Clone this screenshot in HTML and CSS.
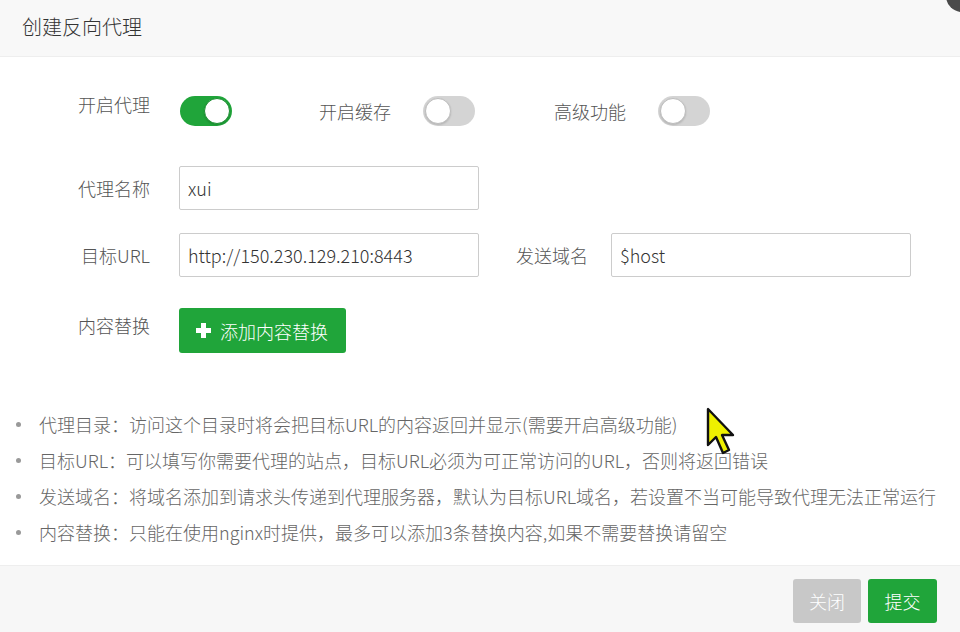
FILE: index.html
```html
<!DOCTYPE html>
<html lang="zh-CN">
<head>
<meta charset="utf-8">
<title>创建反向代理</title>
<link rel="stylesheet" href="styles.css">
</head>
<body>
<div class="dialog">
  <div class="hd">创建反向代理</div>
  <span class="close-btn"></span>
  <div class="bd">
    <div class="row row-switch">
      <label class="lbl">开启代理</label>
      <span class="switch on"><span class="knob"></span></span>
      <div class="sw-item sw-cache">
        <span class="sw-lbl">开启缓存</span>
        <span class="switch"><span class="knob"></span></span>
      </div>
      <div class="sw-item sw-adv">
        <span class="sw-lbl">高级功能</span>
        <span class="switch"><span class="knob"></span></span>
      </div>
    </div>
    <div class="row row-name">
      <label class="lbl lbl-input">代理名称</label>
      <input class="inp" type="text" value="xui">
    </div>
    <div class="row row-url">
      <label class="lbl lbl-input">目标URL</label>
      <input class="inp" type="text" value="http://150.230.129.210:8443">
      <label class="lbl2">发送域名</label>
      <input class="inp" type="text" value="$host">
    </div>
    <div class="row row-replace">
      <label class="lbl lbl-btn">内容替换</label>
      <button class="btn-add"><span class="plus"></span>添加内容替换</button>
    </div>
    <ul class="tips">
      <li>代理目录：访问这个目录时将会把目标URL的内容返回并显示(需要开启高级功能)</li>
      <li>目标URL：可以填写你需要代理的站点，目标URL必须为可正常访问的URL，否则将返回错误</li>
      <li>发送域名：将域名添加到请求头传递到代理服务器，默认为目标URL域名，若设置不当可能导致代理无法正常运行</li>
      <li>内容替换：只能在使用nginx时提供，最多可以添加3条替换内容,如果不需要替换请留空</li>
    </ul>
  </div>
  <div class="ft">
    <button class="btn btn-gray">关闭</button>
    <button class="btn btn-green">提交</button>
  </div>
  <svg class="cursor" width="34" height="50" viewBox="0 0 34 50">
    <polygon points="2,2 2,38 10,30 17,46 23,43 16,28 27,28" fill="#eef000" stroke="#111" stroke-width="2.4" stroke-linejoin="round"/>
  </svg>
</div>
</body>
</html>
```
FILE: styles.css
```css
* { box-sizing: border-box; }
html, body { margin: 0; padding: 0; background: #fff; }
body {
  font-family: "Noto Sans CJK SC", "Noto Sans", sans-serif;
  font-weight: 300;
  color: #555;
  overflow: hidden;
}
.dialog {
  position: relative;
  width: 960px;
  height: 632px;
  display: flex;
  flex-direction: column;
  background: #fff;
}
.hd {
  height: 57px;
  line-height: 54px;
  padding-left: 22px;
  font-size: 20px;
  color: #333;
  background: #f8f8f8;
  border-bottom: 1px solid #eee;
  flex: none;
}
.close-btn {
  position: absolute;
  left: 946px;
  top: -20px;
  width: 32px;
  height: 32px;
  border-radius: 50%;
  background: #4a4a4a;
}
.bd {
  flex: 1;
  padding-top: 31px;
}
.row {
  display: flex;
  align-items: flex-start;
}
.lbl {
  width: 150px;
  text-align: right;
  font-size: 18px;
  line-height: 32px;
  height: 32px;
  color: #555;
  white-space: nowrap;
  flex: none;
}
.lbl-input { margin-top: 6px; }
.lbl-btn { margin-top: 1px; }
.row-switch { height: 38px; }
.row-switch .switch { margin-left: 30px; margin-top: 8px; }
.sw-item {
  display: flex;
  align-items: center;
  margin-top: 8px;
  height: 30px;
}
.sw-item .switch { margin-left: 32px; margin-top: 0; }
.sw-cache { margin-left: 87px; }
.sw-adv { margin-left: 79px; }
.sw-lbl { font-size: 18px; color: #555; line-height: 30px; }
.switch {
  position: relative;
  display: inline-block;
  width: 52px;
  height: 30px;
  border-radius: 15px;
  background: #d4d4d4;
  flex: none;
}
.switch .knob {
  position: absolute;
  top: 2px;
  left: 2px;
  width: 26px;
  height: 26px;
  border-radius: 50%;
  background: #fff;
  border: 1px solid #bdbdbd;
  box-shadow: 0 1px 2px rgba(0,0,0,0.15);
}
.switch.on { background: #20a53a; }
.switch.on .knob { left: 24px; border-color: #1a8f30; }
.row-name { margin-top: 40px; }
.row-url { margin-top: 23px; }
.row-replace { margin-top: 31px; }
.inp {
  width: 300px;
  height: 44px;
  margin-left: 29px;
  padding: 0 8px;
  border: 1px solid #ccc;
  border-radius: 2px;
  font-family: inherit;
  font-weight: 300;
  font-size: 18px;
  color: #333;
  background: #fff;
  outline: none;
}
.lbl2 {
  margin-left: 37px;
  margin-top: 6px;
  font-size: 18px;
  line-height: 32px;
  color: #555;
}
.row-url .lbl2 + .inp { margin-left: 23px; }
.btn-add {
  margin-left: 29px;
  width: 167px;
  height: 45px;
  border: 0;
  border-radius: 3px;
  background: #20a53a;
  color: #fff;
  font-family: inherit;
  font-weight: 300;
  font-size: 18px;
  display: flex;
  align-items: center;
  padding: 0 0 0 17px;
}
.plus {
  position: relative;
  width: 15px;
  height: 15px;
  margin-right: 9px;
  flex: none;
}
.plus::before, .plus::after {
  content: "";
  position: absolute;
  background: #fff;
}
.plus::before { left: 5px; top: 0; width: 5px; height: 15px; }
.plus::after { left: 0; top: 5px; width: 15px; height: 5px; }
.tips {
  list-style: none;
  margin: 53px 0 0 0;
  padding: 0;
}
.tips li {
  position: relative;
  padding-left: 39px;
  line-height: 36px;
  height: 36px;
  font-size: 18px;
  color: #666;
  white-space: nowrap;
}
.tips li::before {
  content: "";
  position: absolute;
  left: 16px;
  top: 16px;
  width: 5px;
  height: 5px;
  border-radius: 50%;
  background: #999;
}
.ft {
  height: 67px;
  flex: none;
  border-top: 1px solid #eee;
  background: #f7f7f7;
  display: flex;
  justify-content: flex-end;
  align-items: flex-start;
  padding: 13px 23px 0 0;
  gap: 7px;
}
.btn {
  height: 44px;
  border: 0;
  border-radius: 3px;
  color: #fff;
  font-family: inherit;
  font-weight: 300;
  font-size: 18px;
  padding: 0;
}
.btn-gray { width: 68px; background: #c8c8c8; }
.btn-green { width: 69px; background: #20a53a; }
.cursor {
  position: absolute;
  left: 706px;
  top: 407px;
}
```
